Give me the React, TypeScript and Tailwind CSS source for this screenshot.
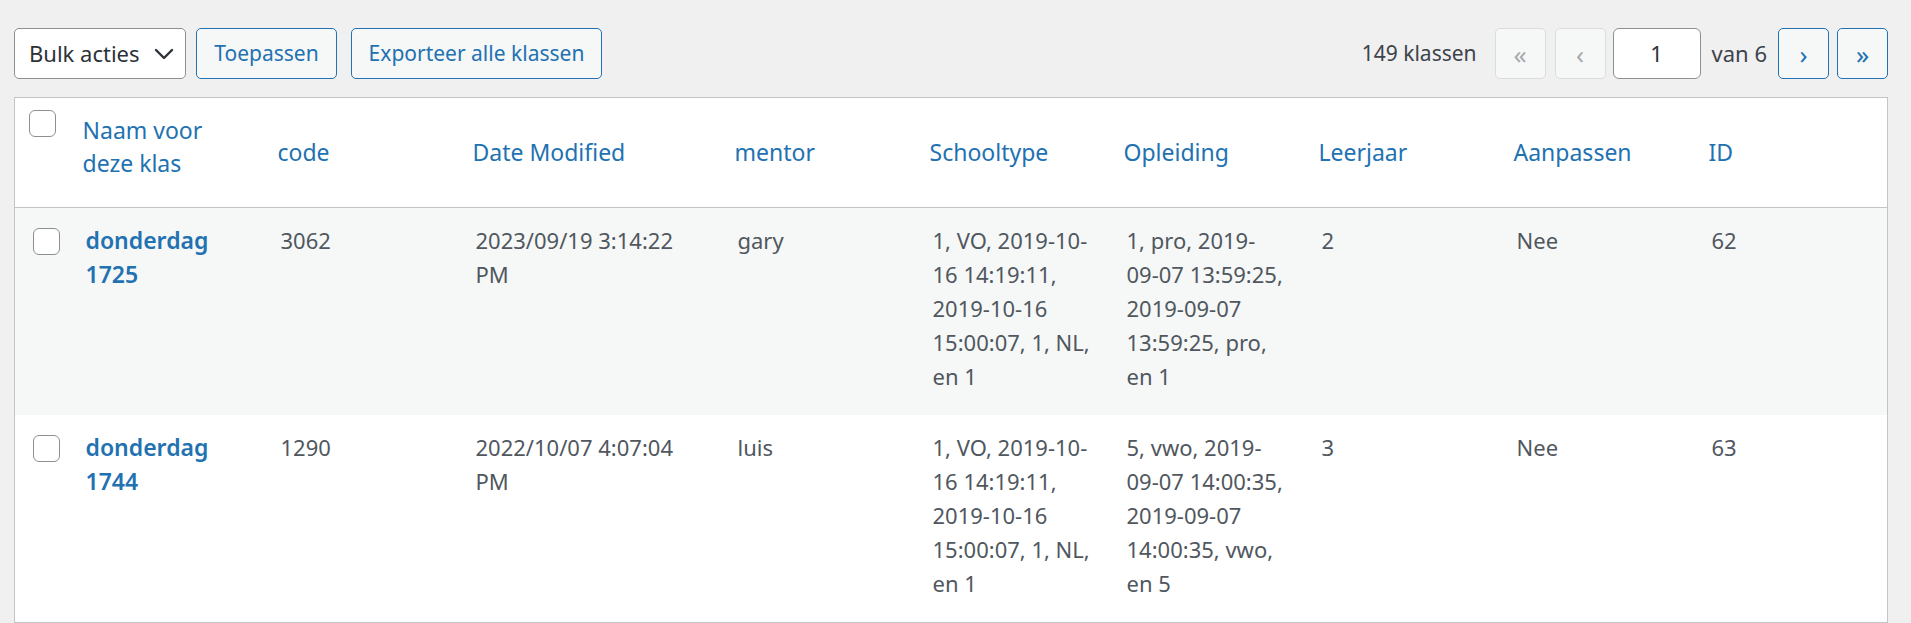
import { ChevronDown } from "lucide-react";

type Row = {
	title: string[];
	code: string;
	date: string[];
	mentor: string;
	schooltype: string[];
	opleiding: string[];
	leerjaar: string;
	aanpassen: string;
	id: string;
};

const rows: Row[] = [
	{
		title: ["donderdag", "1725"],
		code: "3062",
		date: ["2023/09/19 3:14:22", "PM"],
		mentor: "gary",
		schooltype: ["1, VO, 2019-10-", "16 14:19:11,", "2019-10-16", "15:00:07, 1, NL,", "en 1"],
		opleiding: ["1, pro, 2019-", "09-07 13:59:25,", "2019-09-07", "13:59:25, pro,", "en 1"],
		leerjaar: "2",
		aanpassen: "Nee",
		id: "62",
	},
	{
		title: ["donderdag", "1744"],
		code: "1290",
		date: ["2022/10/07 4:07:04", "PM"],
		mentor: "luis",
		schooltype: ["1, VO, 2019-10-", "16 14:19:11,", "2019-10-16", "15:00:07, 1, NL,", "en 1"],
		opleiding: ["5, vwo, 2019-", "09-07 14:00:35,", "2019-09-07", "14:00:35, vwo,", "en 5"],
		leerjaar: "3",
		aanpassen: "Nee",
		id: "63",
	},
];

const headers = ["code", "Date Modified", "mentor", "Schooltype", "Opleiding", "Leerjaar", "Aanpassen", "ID"];

const Checkbox = () => (
	<span className="block w-[27px] h-[27px] rounded-[6px] border border-[#8c8f94] bg-white" />
);

const Lines = ({ lines }: { lines: string[] }) => (
	<>
		{lines.map((l, i) => (
			<div key={i} className="whitespace-nowrap">{l}</div>
		))}
	</>
);

const PageButton = ({ label, disabled }: { label: string; disabled?: boolean }) => (
	<span
		className={
			disabled
				? "flex items-center justify-center w-[51px] h-[51px] rounded-[5px] border border-[#dcdcde] bg-[#f6f7f7] text-[#a7aaad] text-[26px] leading-none"
				: "flex items-center justify-center w-[51px] h-[51px] rounded-[5px] border border-[#2271b1] bg-[#f6f7f7] text-[#2271b1] text-[26px] leading-none"
		}
	>
		{label}
	</span>
);

export default function App() {
	return (
		<div className="min-h-screen w-full bg-[#f0f0f1] font-['Noto_Sans',sans-serif] text-[22px] text-[#3c434a] pt-[28px] pl-[14px] pr-[23px]">
			{/* tablenav top */}
			<div className="flex items-center h-[51px] text-[21px]">
				<div className="flex items-center justify-between w-[172px] h-[51px] pl-[14px] pr-[5px] rounded-[5px] border border-[#8c8f94] bg-white text-[#2c3338]">
					<span className="text-[22px]">Bulk acties</span>
					<ChevronDown size={32} strokeWidth={1.8} className="text-[#2c3338]" />
				</div>
				<button className="ml-[10px] w-[141px] h-[51px] rounded-[5px] border border-[#2271b1] bg-[#f6f7f7] text-[#2271b1]">
					Toepassen
				</button>
				<button className="ml-[14px] w-[251px] h-[51px] rounded-[5px] border border-[#2271b1] bg-[#f6f7f7] text-[#2271b1]">
					Exporteer alle klassen
				</button>

				<div className="ml-auto flex items-center">
					<span className="mr-[18px]">149 klassen</span>
					<PageButton label="«" disabled />
					<span className="ml-[9px]" />
					<PageButton label="‹" disabled />
					<div className="ml-[7px] w-[88px] h-[51px] flex items-center justify-center rounded-[6px] border border-[#8c8f94] bg-white text-[22px] text-[#2c3338]">
						1
					</div>
					<span className="mx-[11px] text-[22px]">van 6</span>
					<PageButton label="›" />
					<span className="ml-[8px]" />
					<PageButton label="»" />
				</div>
			</div>

			{/* list table */}
			<table className="mt-[18px] w-full table-fixed border border-[#c3c4c7] bg-white border-collapse">
				<colgroup>
					<col className="w-[54px]" />
					<col className="w-[195px]" />
					<col className="w-[195px]" />
					<col className="w-[262px]" />
					<col className="w-[195px]" />
					<col className="w-[194px]" />
					<col className="w-[195px]" />
					<col className="w-[195px]" />
					<col className="w-[195px]" />
					<col />
				</colgroup>
				<thead>
					<tr className="h-[110px] border-b border-[#c3c4c7] text-[23px]">
						<td className="align-top pl-[14px] pt-[12px]">
							<Checkbox />
						</td>
						<th className="align-middle text-left font-normal px-[14px] leading-[33px] text-[#2271b1] pb-[12px]">
							<div>Naam voor</div>
							<div>deze klas</div>
						</th>
						{headers.map((h) => (
							<th key={h} className="align-middle text-left font-normal px-[14px] text-[#2271b1] whitespace-nowrap">
								{h}
							</th>
						))}
					</tr>
				</thead>
				<tbody>
					{rows.map((r, i) => (
						<tr key={r.id} className={i % 2 === 0 ? "bg-[#f6f7f7]" : "bg-white"}>
							<td className="align-top pl-[18px] pt-[20px]">
								<Checkbox />
							</td>
							<td className="align-top px-[17px] pt-[15px] pb-[22px] leading-[34px] text-[#2271b1] font-semibold text-[23px]">
								<Lines lines={r.title} />
							</td>
							<td className="align-top px-[17px] pt-[15px] pb-[22px] leading-[34px] text-[#50575e]">{r.code}</td>
							<td className="align-top px-[17px] pt-[15px] pb-[22px] leading-[34px] text-[#50575e]">
								<Lines lines={r.date} />
							</td>
							<td className="align-top px-[17px] pt-[15px] pb-[22px] leading-[34px] text-[#50575e]">{r.mentor}</td>
							<td className="align-top px-[17px] pt-[15px] pb-[22px] leading-[34px] text-[#50575e]">
								<Lines lines={r.schooltype} />
							</td>
							<td className="align-top px-[17px] pt-[15px] pb-[22px] leading-[34px] text-[#50575e]">
								<Lines lines={r.opleiding} />
							</td>
							<td className="align-top px-[17px] pt-[15px] pb-[22px] leading-[34px] text-[#50575e]">{r.leerjaar}</td>
							<td className="align-top px-[17px] pt-[15px] pb-[22px] leading-[34px] text-[#50575e]">{r.aanpassen}</td>
							<td className="align-top px-[17px] pt-[15px] pb-[22px] leading-[34px] text-[#50575e]">{r.id}</td>
						</tr>
					))}
				</tbody>
			</table>
		</div>
	);
}
